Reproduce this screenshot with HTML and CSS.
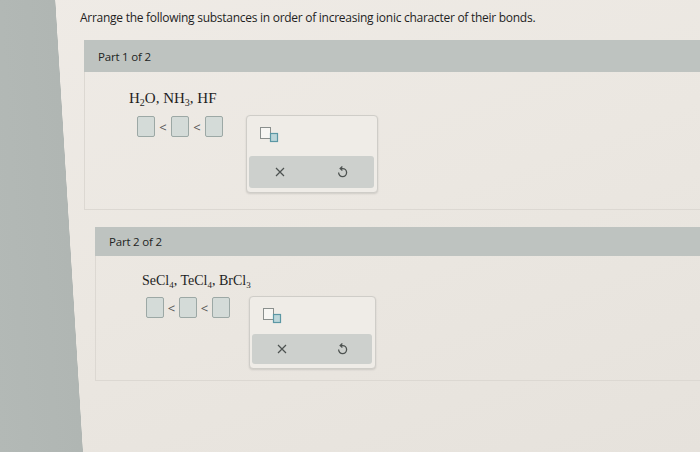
FILE: index.html
```html
<!DOCTYPE html>
<html lang="en">
<head>
<meta charset="utf-8">
<title>Ionic character</title>
<link rel="stylesheet" href="styles.css">
</head>
<body>
<div class="page">
  <main class="content">
    <p class="prompt">Arrange the following substances in order of increasing ionic character of their bonds.</p>

    <section class="part part-1">
      <header class="part-head">Part 1 of 2</header>
      <div class="part-body">
        <div class="formula">H<sub>2</sub>O, NH<sub>3</sub>, HF</div>
        <div class="answer-row">
          <div class="slots">
            <span class="slot"></span><span class="lt">&lt;</span><span class="slot"></span><span class="lt">&lt;</span><span class="slot"></span>
          </div>
          <div class="tools">
            <div class="tool-top">
              <svg class="sub-icon" width="20" height="18" viewBox="0 0 20 18"><rect x="1.5" y="1.5" width="10" height="11" fill="#f7f6f3" stroke="#8a8f8d" stroke-width="1"/><rect x="11.5" y="7.5" width="7" height="8" fill="#bcd6da" stroke="#5b97a4" stroke-width="1.2"/></svg>
            </div>
            <div class="tool-bar">
              <button class="tool-btn" type="button"><svg width="10" height="10" viewBox="0 0 10 10"><path d="M1 1L9 9M9 1L1 9" stroke="#4d5250" stroke-width="1.2" fill="none"/></svg></button>
              <button class="tool-btn" type="button"><svg width="11" height="12" viewBox="0 0 11 12"><path d="M4 2.6H5.6A4 4 0 1 1 1.6 6.6" stroke="#4d5250" stroke-width="1.3" fill="none"/><path d="M5.4 0.6L3.2 2.6L5.4 4.6" stroke="#4d5250" stroke-width="1.3" fill="none"/></svg></button>
            </div>
          </div>
        </div>
      </div>
    </section>

    <section class="part part-2">
      <header class="part-head">Part 2 of 2</header>
      <div class="part-body">
        <div class="formula">SeCl<sub>4</sub>, TeCl<sub>4</sub>, BrCl<sub>3</sub></div>
        <div class="answer-row">
          <div class="slots">
            <span class="slot"></span><span class="lt">&lt;</span><span class="slot"></span><span class="lt">&lt;</span><span class="slot"></span>
          </div>
          <div class="tools">
            <div class="tool-top">
              <svg class="sub-icon" width="20" height="18" viewBox="0 0 20 18"><rect x="1.5" y="1.5" width="10" height="11" fill="#f7f6f3" stroke="#8a8f8d" stroke-width="1"/><rect x="11.5" y="7.5" width="7" height="8" fill="#bcd6da" stroke="#5b97a4" stroke-width="1.2"/></svg>
            </div>
            <div class="tool-bar">
              <button class="tool-btn" type="button"><svg width="10" height="10" viewBox="0 0 10 10"><path d="M1 1L9 9M9 1L1 9" stroke="#4d5250" stroke-width="1.2" fill="none"/></svg></button>
              <button class="tool-btn" type="button"><svg width="11" height="12" viewBox="0 0 11 12"><path d="M4 2.6H5.6A4 4 0 1 1 1.6 6.6" stroke="#4d5250" stroke-width="1.3" fill="none"/><path d="M5.4 0.6L3.2 2.6L5.4 4.6" stroke="#4d5250" stroke-width="1.3" fill="none"/></svg></button>
            </div>
          </div>
        </div>
      </div>
    </section>
  </main>
</div>
</body>
</html>
```

FILE: styles.css
```css
html, body {
  margin: 0;
  padding: 0;
  background: #e9e5df;
}

.page {
  height: 100vh;
  overflow: hidden;
  background:
    linear-gradient(86.5deg, #b3b9b6 0, #b0b6b3 82.5px, transparent 83px),
    linear-gradient(160deg, #efebe6 0%, #ebe7e1 50%, #e6e2dc 100%);
  font-family: "Open Sans", "Liberation Sans", sans-serif;
  color: #2b2b2b;
}

.content {
  padding-left: 80px;
}

.prompt {
  margin: 0;
  padding-top: 10px;
  font-size: 12px;
  line-height: 16px;
  letter-spacing: -0.27px;
  color: #1f1f1f;
}

.part {
  margin-top: 14px;
  margin-left: 4px;
}

.part-2 {
  margin-top: 17px;
  margin-left: 15px;
}

.part-head {
  height: 32px;
  display: flex;
  align-items: center;
  padding-left: 14px;
  background: #bec3c0;
  font-size: 11.5px;
  letter-spacing: -0.2px;
  color: #222423;
}

.part-2 .part-head {
  height: 29px;
}

.part-body {
  border-left: 1px solid #dcd8d2;
  border-bottom: 1px solid #dcd8d2;
  height: 120px;
  padding: 17px 0 0 44px;
}

.part-2 .part-body {
  height: 108px;
  padding-top: 16px;
}

.formula {
  font-family: "Liberation Serif", "Times New Roman", serif;
  font-size: 15px;
  line-height: 18px;
  color: #1e1e1e;
}

.part-2 .formula {
  font-size: 14px;
  padding-left: 2px;
}

.formula sub {
  font-size: 10px;
  line-height: 0;
  vertical-align: -3px;
}

.part-2 .formula sub {
  font-size: 9px;
}

.answer-row {
  display: flex;
  align-items: flex-start;
  margin-top: 8px;
}

.part-2 .answer-row {
  margin-top: 6px;
}

.slots {
  display: flex;
  align-items: center;
  margin-left: 8px;
  margin-top: 1px;
}

.part-2 .slots {
  margin-left: 6px;
}

.slot {
  width: 16px;
  height: 19px;
  border: 1px solid #9ca8a5;
  border-radius: 2px;
  background: #d4dbd8;
}

.lt {
  width: 16px;
  text-align: center;
  font-size: 13px;
  line-height: 14px;
  color: #555;
}

.part-2 .lt {
  width: 15px;
}

.tools {
  margin-left: 23px;
  width: 132px;
  height: 78px;
  box-sizing: border-box;
  border: 1px solid #cfcdc8;
  border-radius: 4px;
  background: #efece7;
  box-shadow: 0 1px 2px rgba(0,0,0,0.12);
  display: flex;
  flex-direction: column;
  padding: 0 3px 4px 2px;
}

.part-2 .tools {
  margin-left: 19px;
  width: 127px;
  height: 73px;
}

.tool-top {
  flex: 1;
  padding: 10px 0 0 10px;
}

.sub-icon {
  display: block;
}

.tool-bar {
  height: 32px;
  display: flex;
  background: #cdd0cd;
  border-radius: 3px;
}

.part-2 .tool-bar {
  height: 30px;
}

.tool-btn {
  flex: 1;
  border: 0;
  background: transparent;
  padding: 0;
  display: flex;
  align-items: center;
  justify-content: center;
}
```
